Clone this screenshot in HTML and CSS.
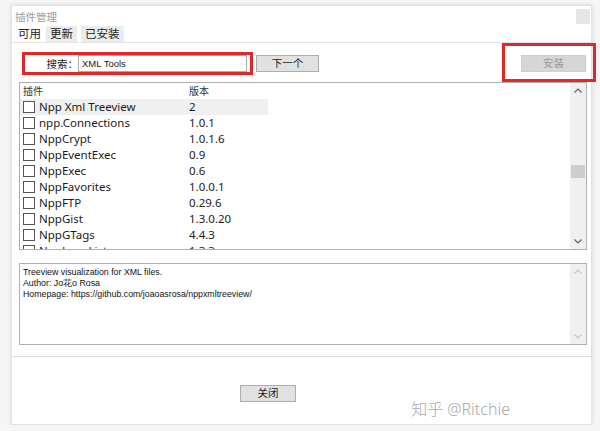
FILE: index.html
```html
<!DOCTYPE html>
<html lang="zh">
<head>
  <meta charset="UTF-8">
  <link rel="stylesheet" href="styles.css">
</head>
<body>
  <div class="window">
    <div class="title">插件管理</div>
    <div class="close-box"></div>

    <div class="tabs">
      <span class="tab active">可用</span>
      <span class="tab">更新</span>
      <span class="tab">已安装</span>
    </div>

    <div class="panel">
      <div class="search-row">
        <span class="search-label">搜索：</span>
        <div class="search-input">XML Tools</div>
        <div class="btn next-btn">下一个</div>
        <div class="btn install-btn">安装</div>
      </div>

      <div class="list">
        <div class="list-body">
          <div class="row head">
            <span class="col-name">插件</span>
            <span class="col-ver">版本</span>
          </div>
          <div class="row sel"><span class="col-name"><i class="cb"></i>Npp Xml Treeview</span><span class="col-ver">2</span></div>
          <div class="row"><span class="col-name"><i class="cb"></i>npp.Connections</span><span class="col-ver">1.0.1</span></div>
          <div class="row"><span class="col-name"><i class="cb"></i>NppCrypt</span><span class="col-ver">1.0.1.6</span></div>
          <div class="row"><span class="col-name"><i class="cb"></i>NppEventExec</span><span class="col-ver">0.9</span></div>
          <div class="row"><span class="col-name"><i class="cb"></i>NppExec</span><span class="col-ver">0.6</span></div>
          <div class="row"><span class="col-name"><i class="cb"></i>NppFavorites</span><span class="col-ver">1.0.0.1</span></div>
          <div class="row"><span class="col-name"><i class="cb"></i>NppFTP</span><span class="col-ver">0.29.6</span></div>
          <div class="row"><span class="col-name"><i class="cb"></i>NppGist</span><span class="col-ver">1.3.0.20</span></div>
          <div class="row"><span class="col-name"><i class="cb"></i>NppGTags</span><span class="col-ver">4.4.3</span></div>
          <div class="row"><span class="col-name"><i class="cb"></i>NppLangList</span><span class="col-ver">1.3.3</span></div>
        </div>
        <div class="vscroll">
          <svg class="arrow" width="16" height="16" viewBox="0 0 16 16"><path d="M4.5 9.5 L8 6 L11.5 9.5" fill="none" stroke="#606060" stroke-width="1.2"/></svg>
          <div class="track"><div class="thumb"></div></div>
          <svg class="arrow" width="16" height="16" viewBox="0 0 16 16"><path d="M4.5 6.5 L8 10 L11.5 6.5" fill="none" stroke="#606060" stroke-width="1.2"/></svg>
        </div>
      </div>

      <div class="desc">
        <div class="desc-text">
          Treeview visualization for XML files.<br>
          Author: Jo花o Rosa<br>
          Homepage: https://github.com/joaoasrosa/nppxmltreeview/
        </div>
        <div class="vscroll">
          <svg class="arrow" width="16" height="16" viewBox="0 0 16 16"><path d="M4.5 9.5 L8 6 L11.5 9.5" fill="none" stroke="#c4c4c4" stroke-width="1.2"/></svg>
          <div class="track"></div>
          <svg class="arrow" width="16" height="16" viewBox="0 0 16 16"><path d="M4.5 6.5 L8 10 L11.5 6.5" fill="none" stroke="#c4c4c4" stroke-width="1.2"/></svg>
        </div>
      </div>
    </div>

    <div class="footer">
      <div class="btn close-btn">关闭</div>
      <div class="watermark">知乎 @Ritchie</div>
    </div>

    <div class="mark mark-search"></div>
    <div class="mark mark-install"></div>
  </div>
</body>
</html>
```

FILE: styles.css
```css
body {
  margin: 0;
  padding: 5px 0 0 11px;
  background-color: #f6f6f6;
  font-family: 'Noto Sans', 'Noto Sans CJK SC', sans-serif;
  font-size: 11px;
  color: #1a1a1a;
}

.window {
  position: relative;
  width: 581px;
  height: 420px;
  background-color: #fff;
  border: 1px solid #e2e2e2;
  box-sizing: border-box;
  box-shadow: 0 0 5px rgba(0, 0, 0, 0.12);
}

.title {
  height: 20px;
  line-height: 22px;
  padding-left: 3px;
  color: #9a9a9a;
  font-size: 10.5px;
}

.close-box {
  position: absolute;
  top: 3px;
  right: 1px;
  width: 14px;
  height: 15px;
  background-color: #e6e6e6;
}

.tabs {
  display: flex;
  height: 16px;
  padding-left: 2px;
}

.tab {
  padding: 0 4px;
  margin-right: 4px;
  line-height: 16px;
  font-size: 11.5px;
  background-color: #ececec;
  color: #222;
}

.tab.active {
  background-color: #fff;
  margin-right: 1px;
}

.panel {
  height: 315px;
  border-top: 1px solid #e4e4e4;
  border-bottom: 1px solid #dcdcdc;
  box-sizing: border-box;
  padding: 12px 4px 0 7px;
}

.search-row {
  display: flex;
  align-items: center;
  height: 17px;
}

.search-label {
  width: 59px;
  text-align: right;
  font-size: 10.5px;
}

.search-input {
  width: 169px;
  height: 17px;
  border: 1px solid #a9a9a9;
  box-sizing: border-box;
  padding-left: 3px;
  line-height: 15px;
  font-size: 9.5px;
  font-family: 'Liberation Sans', sans-serif;
}

.btn {
  height: 17px;
  line-height: 15px;
  border: 1px solid #adadad;
  box-sizing: border-box;
  background-color: #e1e1e1;
  text-align: center;
  font-size: 10.5px;
}

.next-btn {
  width: 63px;
  margin-left: 9px;
}

.install-btn {
  width: 65px;
  margin-left: auto;
  margin-right: 1px;
  background-color: #d6d6d6;
  border-color: #cfcfcf;
  color: #9a9a9a;
}

.list {
  display: flex;
  height: 168px;
  margin-top: 10px;
  border: 1px solid #b0b0b0;
  box-sizing: border-box;
  overflow: hidden;
}

.list-body {
  flex: 1;
}

.row {
  display: flex;
  height: 16px;
  line-height: 16px;
  font-size: 11.5px;
  width: 248px;
}

.row.head {
  font-size: 10px;
  color: #333;
}

.row.sel {
  background-color: #f0f0f0;
}

.col-name {
  width: 166px;
  padding-left: 3px;
  display: flex;
  align-items: center;
}

.col-ver {
  flex: 1;
}

.cb {
  width: 10px;
  height: 10px;
  border: 1px solid #555;
  margin-right: 4px;
  background-color: #fff;
}

.vscroll {
  width: 16px;
  display: flex;
  flex-direction: column;
  background-color: #f0f0f0;
}

.arrow {
  display: block;
  flex: none;
}

.track {
  flex: 1;
  position: relative;
}

.thumb {
  position: absolute;
  top: 66px;
  left: 1px;
  width: 14px;
  height: 13px;
  background-color: #cdcdcd;
}

.desc {
  display: flex;
  height: 82px;
  margin-top: 13px;
  border: 1px solid #b0b0b0;
  box-sizing: border-box;
}

.desc-text {
  flex: 1;
  padding: 3px 3px;
  font-family: 'Liberation Sans', sans-serif;
  font-size: 8.8px;
  line-height: 11px;
  color: #111;
}

.footer {
  position: relative;
  height: 68px;
  padding-top: 28px;
  box-sizing: border-box;
}

.close-btn {
  width: 56px;
  margin-left: 228px;
}

.watermark {
  position: absolute;
  right: 81px;
  bottom: 5px;
  font-size: 16px;
  font-weight: 300;
  color: #a9a9a9;
}

.mark {
  position: absolute;
  border: 3px solid #e0282a;
  box-sizing: border-box;
}

.mark-search {
  left: 10px;
  top: 46px;
  width: 231px;
  height: 23px;
}

.mark-install {
  left: 490px;
  top: 37px;
  width: 94px;
  height: 39px;
}
```
